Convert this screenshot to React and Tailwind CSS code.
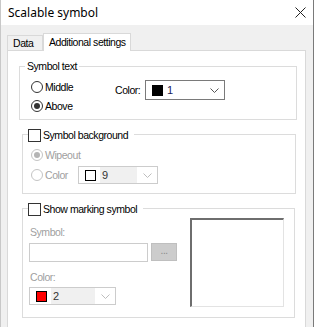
import React from 'react';

const body = "font-['Liberation_Sans',Arial,sans-serif]";
const title = "font-['Segoe_UI','Noto_Sans',sans-serif]";

function Radio({ checked, disabled, label }) {
    return (
        <div className="flex items-center gap-[2px]">
            <span
                className={`w-[12px] h-[12px] rounded-full border flex items-center justify-center bg-white ${
                    disabled ? 'border-[#c4c4c4]' : 'border-[#333]'
                }`}
            >
                {checked && (
                    <span className={`w-[6px] h-[6px] rounded-full ${disabled ? 'bg-[#b5b5b5]' : 'bg-[#333]'}`} />
                )}
            </span>
            <span className={disabled ? 'text-[#a0a0a0]' : 'text-black'}>{label}</span>
        </div>
    );
}

function Check({ label }) {
    return (
        <div className="flex items-center gap-[2px] bg-white pr-[6px]">
            <span className="w-[13px] h-[13px] border border-[#333] bg-white" />
            <span className="text-black">{label}</span>
        </div>
    );
}

function Chevron({ color }) {
    return (
        <svg width="9" height="5" viewBox="0 0 9 5">
            <path d="M0.5 0.5 L4.5 4.5 L8.5 0.5" fill="none" stroke={color} strokeWidth="1" />
        </svg>
    );
}

function Combo({ swatch, value, disabled, className }) {
    return (
        <div
            className={`flex items-center border bg-white ${
                disabled ? 'border-[#cccccc]' : 'border-[#7a7a7a]'
            } ${className}`}
        >
            <span className={`ml-[6px] w-[11px] h-[11px] border border-black ${swatch}`} />
            <span className={`ml-[4px] text-[11px] ${disabled ? 'text-[#333] bg-[#f0f0f0] flex-1 pl-[2px] h-full flex items-center' : 'text-[#1a1a5a] flex-1'}`}>
                {value}
            </span>
            <span className="w-[20px] flex justify-center">
                <Chevron color={disabled ? '#bdbdbd' : '#555'} />
            </span>
        </div>
    );
}

export default function App() {
    return (
        <div className={`w-[314px] h-[327px] overflow-hidden bg-[#f0f0f0] border-l border-l-[#c8c8c8] border-r border-r-[#7a7a7a] text-[10.5px] tracking-[-0.45px] leading-[16px] ${body}`}>
            {/* Title bar */}
            <div className={`h-[25px] bg-white flex items-center justify-between pl-[7px] pr-[7px] text-[12px] tracking-normal ${title}`}>
                <span className="text-black">Scalable symbol</span>
                <svg width="11" height="11" viewBox="0 0 11 11">
                    <path d="M0.5 0.5 L10.5 10.5 M10.5 0.5 L0.5 10.5" stroke="#222" strokeWidth="1" />
                </svg>
            </div>

            <div className="pl-[6px] pt-[7px]">
                {/* Tabs */}
                <div className="flex items-end h-[18px]">
                    <div className="w-[36px] h-[15px] border border-b-0 border-[#d9d9d9] bg-[#f0f0f0] pl-[5px] flex items-center">
                        Data
                    </div>
                    <div className="w-[88px] h-[18px] border border-b-0 border-[#d9d9d9] bg-white pl-[5px] relative z-10 -mb-px pb-[2px] flex items-center whitespace-nowrap">
                        Additional settings
                    </div>
                </div>

                {/* Panel */}
                <div className="w-[299px] h-[290px] border border-[#d9d9d9] bg-white pt-[15px]">
                    {/* Symbol text */}
                    <div className="relative ml-[11px] w-[278px] h-[54px] border border-[#dcdcdc]">
                        <span className="absolute -top-[9px] left-[5px] bg-white px-[2px] text-black">Symbol text</span>
                        <div className="flex pt-[10px] pl-[11px]">
                            <div className="w-[84px] flex flex-col">
                                <div className="h-[19px] flex items-center"><Radio label="Middle" /></div>
                                <div className="h-[19px] flex items-center"><Radio checked label="Above" /></div>
                            </div>
                            <div className="flex items-start gap-[4px] mt-[3px]">
                                <span className="mt-[2px] text-black w-[26px]">Color:</span>
                                <Combo swatch="bg-black" value="1" className="w-[80px] h-[20px]" />
                            </div>
                        </div>
                    </div>

                    {/* Symbol background */}
                    <div className="relative ml-[14px] mt-[14px] w-[274px] h-[60px] border border-[#dcdcdc]">
                        <div className="absolute -top-[8px] left-[5px]"><Check label="Symbol background" /></div>
                        <div className="flex flex-col pt-[10px] pl-[8px]">
                            <div className="h-[20px] flex items-center"><Radio checked disabled label="Wipeout" /></div>
                            <div className="h-[20px] flex items-center">
                                <div className="w-[47px]"><Radio disabled label="Color" /></div>
                                <Combo disabled swatch="bg-white" value="9" className="w-[80px] h-[18px]" />
                            </div>
                        </div>
                    </div>

                    {/* Show marking symbol */}
                    <div className="relative ml-[14px] mt-[14px] w-[273px] h-[110px] border border-[#dcdcdc] flex pl-[6px]">
                        <div className="absolute -top-[8px] left-[5px]"><Check label="Show marking symbol" /></div>
                        <div className="flex flex-col pt-[15px] w-[148px]">
                            <span className="h-[16px] text-[#a0a0a0] pl-[1px]">Symbol:</span>
                            <div className="flex mt-[3px] gap-[3px]">
                                <div className="w-[120px] h-[19px] border border-[#cccccc] bg-white" />
                                <div className="w-[26px] h-[18px] bg-[#cccccc] border border-[#bfbfbf] flex items-center justify-center text-[#8a8a8a] text-[10px] leading-none pb-[3px]">
                                    ...
                                </div>
                            </div>
                            <span className="h-[16px] mt-[7px] text-[#a0a0a0] pl-[1px]">Color:</span>
                            <Combo disabled swatch="bg-[#ff0000]" value="2" className="w-[87px] h-[18px] mt-[2px]" />
                        </div>
                        <div className="ml-[13px] mt-[9px] w-[94px] h-[89px] border-t-2 border-l-2 border-t-[#6e6e6e] border-l-[#6e6e6e] border-r border-b border-r-[#e3e3e3] border-b-[#e3e3e3] bg-white" />
                    </div>
                </div>
            </div>
        </div>
    );
}
